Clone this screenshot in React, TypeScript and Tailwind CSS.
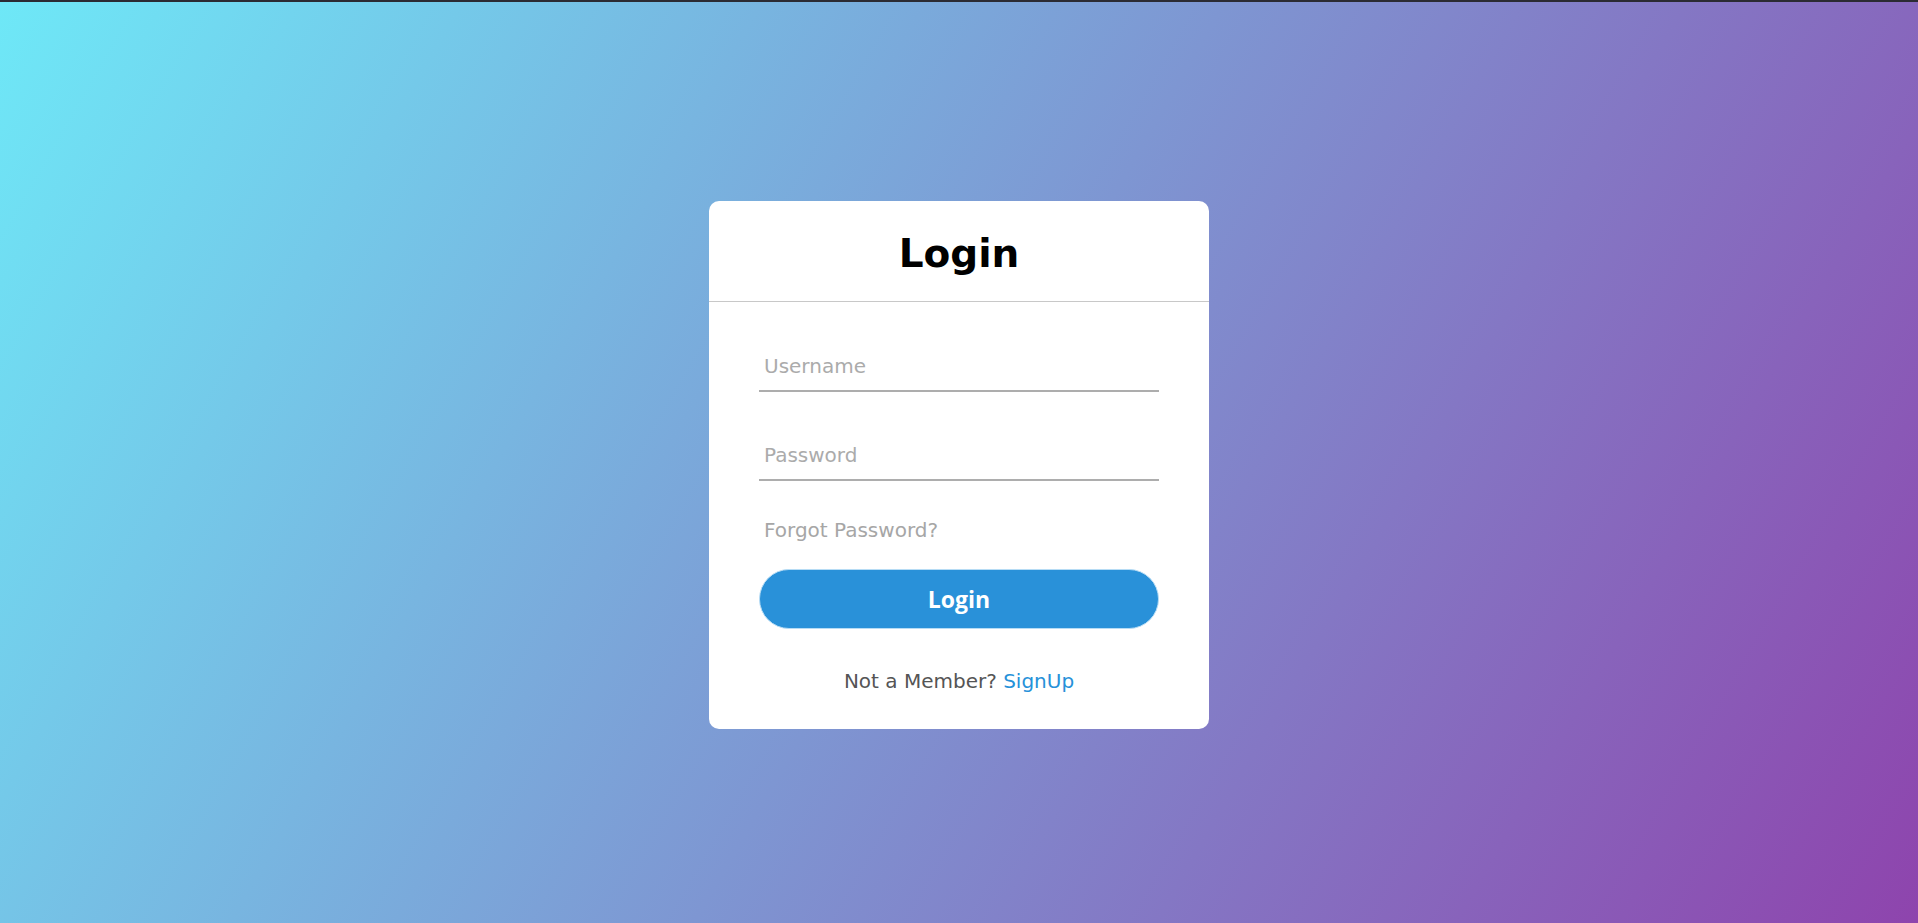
import React from "react";

export default function App() {
  const font = { fontFamily: '"DejaVu Sans", "Noto Sans", sans-serif' };
  return (
    <div className="min-h-screen w-full flex flex-col" style={font}>
      <div className="h-[2px] w-full bg-[#2b2b33]" />
      <div className="flex-1 w-full flex justify-center items-start pt-[199px] bg-[linear-gradient(120deg,#6ee8f7_0%,#8e44ad_100%)]">
        <div className="w-[500px] bg-white rounded-[10px] flex flex-col">
          <div className="h-[101px] pt-[4px] flex items-center justify-center border-b border-[#c8c8c8]">
            <h1 className="text-[39px] font-bold text-black leading-none">Login</h1>
          </div>
          <div className="px-[50px] pt-[40px] pb-[36px] flex flex-col">
            <input
              type="text"
              placeholder="Username"
              className="h-[50px] w-full border-b-2 border-[#adadad] px-[5px] text-[20px] text-[#555] outline-none placeholder:text-[#ababab] bg-transparent"
            />
            <input
              type="password"
              placeholder="Password"
              className="mt-[39px] h-[50px] w-full border-b-2 border-[#adadad] px-[5px] text-[20px] text-[#555] outline-none placeholder:text-[#ababab] bg-transparent"
            />
            <div className="mt-[37px] h-[24px] leading-[24px] px-[5px] text-[20px] text-[#a6a6a6]">
              Forgot Password?
            </div>
            <button
              className="mt-[27px] h-[60px] w-full rounded-full bg-[#2991d9] border border-[#b6dcf5] text-white text-[23px] font-bold flex items-center justify-center"
              style={{ fontFamily: '"Open Sans", "Noto Sans", sans-serif' }}
            >
              Login
            </button>
            <div className="mt-[40px] h-[24px] leading-[24px] text-center text-[20px] text-[#555]">
              Not a Member? <span className="text-[#2691d9]">SignUp</span>
            </div>
          </div>
        </div>
      </div>
    </div>
  );
}
